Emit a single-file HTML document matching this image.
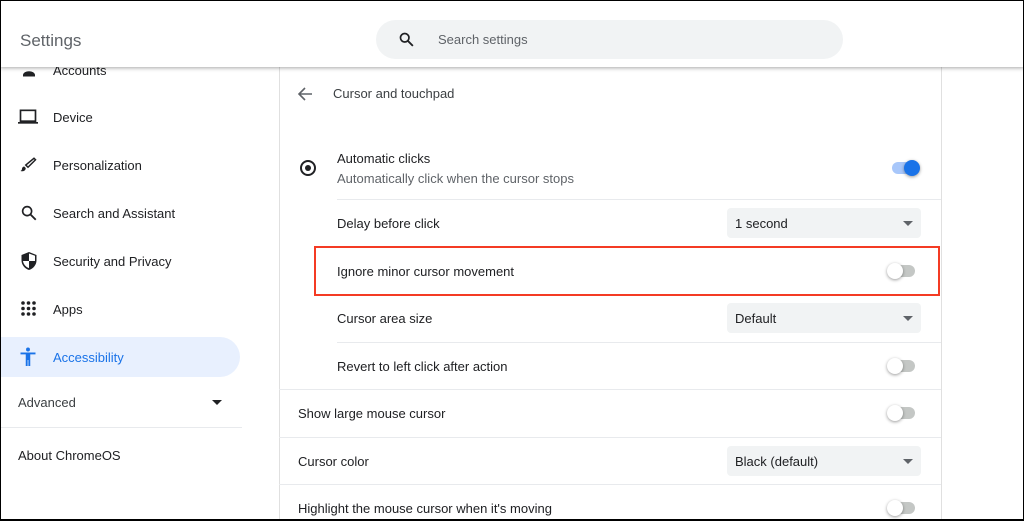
<!DOCTYPE html>
<html><head><meta charset="utf-8"><style>
*{box-sizing:border-box;margin:0;padding:0}
body{width:1024px;height:521px;overflow:hidden;background:#fff;font-family:"Liberation Sans",Arial,sans-serif;color:#202124;position:relative}
.frame{position:absolute;left:0;top:0;width:1024px;height:521px;border:1px solid #000;border-bottom-width:2px;z-index:50;pointer-events:none}
.hdr{position:absolute;left:0;top:0;width:1024px;height:67px;background:#fff;box-shadow:0 1px 4px rgba(0,0,0,.35);z-index:10}
.title{position:absolute;left:20px;top:31px;font-size:17px;color:#5f6368}
.search{position:absolute;left:376px;top:20px;width:467px;height:39px;background:#f1f3f4;border-radius:20px}
.search span{position:absolute;left:62px;top:12px;font-size:13px;color:#5f6368}
.t{position:absolute;font-size:13px;white-space:nowrap;line-height:16px;margin-top:1px}
.ic{position:absolute}
.hl{position:absolute;left:0;top:337px;width:240px;height:40px;background:#e8f0fe;border-radius:0 20px 20px 0}
.line{position:absolute;height:1px;background:#e8eaed}
.vl{position:absolute;width:1px;background:#e0e0e0;top:67px;height:454px}
.dd{position:absolute;left:727px;width:194px;height:30px;background:#f1f3f4;border-radius:4px}
.dd span{position:absolute;left:8px;top:8px;font-size:13px}
.dd i{position:absolute;right:8px;top:13px;border-left:5px solid transparent;border-right:5px solid transparent;border-top:5px solid #5f6368}
.tg{position:absolute;width:30px;height:16px}
.tg .tr{position:absolute;left:2px;top:2px;width:26px;height:12px;border-radius:6px;background:#c4c7c5}
.tg .kn{position:absolute;left:0;top:0;width:16px;height:16px;border-radius:50%;background:#fff;box-shadow:0 1px 3px rgba(0,0,0,.4)}
.tg.on .tr{background:#a8c7fa}
.tg.on .kn{left:14px;background:#1a73e8}
.red{position:absolute;left:314px;top:246px;width:626px;height:50px;border:2px solid #f43b24}
</style></head><body>
<div class="hl"></div>
<svg class="ic" style="left:20px;top:60px" width="18" height="18" viewBox="0 0 24 24"><circle cx="12" cy="5" r="4" fill="#202124"/><path d="M4 20c0-3 4-5 8-5s8 2 8 5v2H4z" fill="#202124"/></svg>
<div class="t" style="left:53px;top:62px">Accounts</div>
<svg class="ic" style="left:18px;top:108px" width="20" height="18" viewBox="0 0 24 20"><rect x="3" y="2" width="18" height="13" fill="none" stroke="#202124" stroke-width="2"/><rect x="0" y="16" width="24" height="2" fill="#202124"/></svg>
<div class="t" style="left:53px;top:109px">Device</div>
<svg class="ic" style="left:19px;top:156px" width="18" height="18" viewBox="0 0 24 24"><path d="M20 3l2 2-10 10-3-3z" fill="none" stroke="#202124" stroke-width="2"/><path d="M7 14c-2 0-3 2-3 3 0 2-2 3-2 3 3 1 7 0 7-4z" fill="#202124"/></svg>
<div class="t" style="left:53px;top:157px">Personalization</div>
<svg class="ic" style="left:20px;top:204px" width="18" height="18" viewBox="0 0 24 24"><circle cx="9.5" cy="9.5" r="6" fill="none" stroke="#202124" stroke-width="2.2"/><path d="M14 14l7 7" stroke="#202124" stroke-width="2.5"/></svg>
<div class="t" style="left:53px;top:205px">Search and Assistant</div>
<svg class="ic" style="left:20px;top:251px" width="18" height="20" viewBox="0 0 24 26"><path d="M12 1L2 5v7c0 6 4 11 10 13 6-2 10-7 10-13V5z" fill="#202124"/><path d="M12 13H4c.5 4 3.5 8 8 9.5z M12 13h8V6l-8-3z" fill="#fff"/></svg>
<div class="t" style="left:53px;top:253px">Security and Privacy</div>
<svg class="ic" style="left:21px;top:301px" width="15" height="15" viewBox="0 0 15 15" fill="#202124"><circle cx="2" cy="2" r="1.8"/><circle cx="7.5" cy="2" r="1.8"/><circle cx="13" cy="2" r="1.8"/><circle cx="2" cy="7.5" r="1.8"/><circle cx="7.5" cy="7.5" r="1.8"/><circle cx="13" cy="7.5" r="1.8"/><circle cx="2" cy="13" r="1.8"/><circle cx="7.5" cy="13" r="1.8"/><circle cx="13" cy="13" r="1.8"/></svg>
<div class="t" style="left:53px;top:301px">Apps</div>
<svg class="ic" style="left:19px;top:347px" width="18" height="20" viewBox="0 0 24 26"><circle cx="12" cy="3" r="2.6" fill="#1a73e8"/><path d="M2 7h20v2.5h-7V25h-2.5v-8h-1v8H9V9.5H2z" fill="#1a73e8"/></svg>
<div class="t" style="left:53px;top:349px;color:#1a73e8">Accessibility</div>
<div class="t" style="left:18px;top:394px;color:#3c4043">Advanced</div>
<div style="position:absolute;left:212px;top:400px;border-left:5px solid transparent;border-right:5px solid transparent;border-top:5px solid #202124"></div>
<div class="line" style="left:0;top:427px;width:242px"></div>
<div class="t" style="left:18px;top:447px">About ChromeOS</div>
<div class="vl" style="left:279px"></div>
<div class="vl" style="left:941px"></div>
<svg class="ic" style="left:297px;top:86px" width="16" height="16" viewBox="0 0 16 16"><path d="M15 8H2M8 2L2 8l6 6" fill="none" stroke="#5f6368" stroke-width="1.6"/></svg>
<div class="t" style="left:333px;top:85px;color:#3c4043">Cursor and touchpad</div>
<svg class="ic" style="left:299px;top:159px" width="18" height="18" viewBox="0 0 18 18"><circle cx="9" cy="9" r="7" fill="none" stroke="#202124" stroke-width="2"/><circle cx="9" cy="9" r="3" fill="#202124"/></svg>
<div class="t" style="left:337px;top:150px">Automatic clicks</div>
<div class="t" style="left:337px;top:170px;color:#5f6368">Automatically click when the cursor stops</div>
<div class="tg on" style="left:890px;top:160px"><div class="tr"></div><div class="kn"></div></div>
<div class="line" style="left:337px;top:199px;width:604px"></div>
<div class="t" style="left:337px;top:215px">Delay before click</div>
<div class="dd" style="top:208px"><span>1 second</span><i></i></div>
<div class="t" style="left:337px;top:263px">Ignore minor cursor movement</div>
<div class="tg" style="left:887px;top:263px"><div class="tr"></div><div class="kn"></div></div>
<div class="red"></div>
<div class="t" style="left:337px;top:310px">Cursor area size</div>
<div class="dd" style="top:303px"><span>Default</span><i></i></div>
<div class="line" style="left:337px;top:342px;width:604px"></div>
<div class="t" style="left:337px;top:358px">Revert to left click after action</div>
<div class="tg" style="left:887px;top:358px"><div class="tr"></div><div class="kn"></div></div>
<div class="line" style="left:279px;top:389px;width:662px"></div>
<div class="t" style="left:298px;top:405px">Show large mouse cursor</div>
<div class="tg" style="left:887px;top:405px"><div class="tr"></div><div class="kn"></div></div>
<div class="line" style="left:279px;top:437px;width:662px"></div>
<div class="t" style="left:298px;top:453px">Cursor color</div>
<div class="dd" style="top:446px"><span>Black (default)</span><i></i></div>
<div class="line" style="left:279px;top:484px;width:662px"></div>
<div class="t" style="left:298px;top:500px">Highlight the mouse cursor when it's moving</div>
<div class="tg" style="left:887px;top:500px"><div class="tr"></div><div class="kn"></div></div>
<div class="hdr">
<div class="title">Settings</div>
<div class="search">
<svg style="position:absolute;left:22px;top:11px" width="17" height="17" viewBox="0 0 24 24"><circle cx="9.5" cy="9.5" r="6" fill="none" stroke="#202124" stroke-width="2.4"/><path d="M14 14l7 7" stroke="#202124" stroke-width="2.6"/></svg>
<span>Search settings</span></div>
</div>
<div class="frame"></div>
</body></html>
